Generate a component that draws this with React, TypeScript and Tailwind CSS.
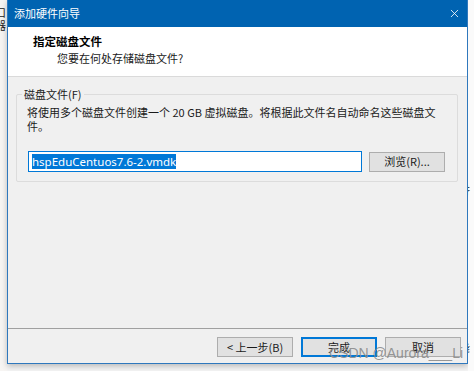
import { X } from "lucide-react";

const cjk = { fontFamily: '"Noto Sans CJK SC", "Noto Sans", sans-serif' };
const latin = { fontFamily: '"Noto Sans", "Noto Sans CJK SC", sans-serif' };

function Button({ children, focused }: { children: React.ReactNode; focused?: boolean }) {
  return (
    <button
      className={
        "h-[20px] w-[76px] flex items-center justify-center bg-[#e1e1e1] text-[11px] text-[#1a1a1a] leading-none " +
        (focused ? "border-2 border-[#0078d7]" : "border border-[#adadad]")
      }
      style={cjk}
    >
      {children}
    </button>
  );
}

export default function App() {
  return (
    <div className="relative w-[474px] h-[371px] overflow-hidden flex bg-[#f4f4f4]" style={cjk}>
      {/* background window, left edge */}
      <div className="w-[7px] shrink-0 bg-[#f7f5f3] overflow-hidden pt-[6px] text-[11px] leading-[13px] text-[#222]">
        <div className="-ml-[5px]">口</div>
        <div className="-ml-[5px]">器</div>
      </div>

      {/* dialog */}
      <div className="w-[461px] h-[364px] shrink-0 flex flex-col border border-t-0 border-[#2f78bd] shadow-[0_2px_6px_rgba(0,0,0,0.25)]">
        <div className="h-[27px] bg-[#0063b1] flex items-center justify-between pl-[6px] pr-[6px] text-white">
          <span className="text-[11px]">添加硬件向导</span>
          <X className="w-[13px] h-[13px]" strokeWidth={1.5} />
        </div>

        <div className="h-[50px] bg-white border-b border-[#dadada] pl-[25px] pt-[7px]">
          <div className="text-[11.5px] font-bold text-black leading-[15px]">指定磁盘文件</div>
          <div className="text-[11px] text-[#1a1a1a] leading-[15px] pl-[24px] pt-[2px]">您要在何处存储磁盘文件?</div>
        </div>

        <div className="flex-1 bg-[#f0f0f0] pt-[17px] pl-[8px] pr-[9px]">
          <div className="relative h-[88px] border border-[#dcdcdc] rounded-[2px] pt-[10px] pl-[10px] pr-[6px]">
            <span className="absolute -top-[8px] left-[5px] bg-[#f0f0f0] px-[2px] text-[11px] leading-[15px] text-[#1a1a1a]">
              磁盘文件(F)
            </span>
            <p className="text-[11px] leading-[14px] text-[#1a1a1a]">
              将使用多个磁盘文件创建一个 20 GB 虚拟磁盘。将根据此文件名自动命名这些磁盘文
              <br />
              件。
            </p>
            <div className="flex items-center gap-[7px] mt-[18px] pl-[1px]">
              <div className="w-[334px] h-[21px] bg-white border border-[#0078d7] flex items-center pl-[3px]">
                <span className="bg-[#0078d7] text-white text-[11.5px] leading-[15px]" style={latin}>
                  hspEduCentuos7.6-2.vmdk
                </span>
              </div>
              <Button>浏览(R)...</Button>
            </div>
          </div>
        </div>

        <div className="h-[35px] bg-[#f0f0f0] border-t border-[#a0a0a0] flex items-start justify-end gap-[8px] pr-[6px] pt-[8px]">
          <Button>&lt; 上一步(B)</Button>
          <Button focused>完成</Button>
          <Button>取消</Button>
        </div>
      </div>

      {/* background window, right edge */}
      <div className="flex-1 bg-[#fafafa] overflow-hidden text-[11px] text-[#222] leading-[13px]">
        <div className="mt-[184px] -ml-[4px]">扌</div>
        <div className="mt-[145px] -ml-[4px]">纟</div>
      </div>

      {/* watermark */}
      <span
        className="absolute z-10 left-[329px] top-[345px] text-[14px] leading-[17px] text-[#8a8a8a]/90"
        style={{ fontFamily: '"Liberation Sans", sans-serif' }}
      >
        CSDN @Aurora___Li
      </span>
    </div>
  );
}
